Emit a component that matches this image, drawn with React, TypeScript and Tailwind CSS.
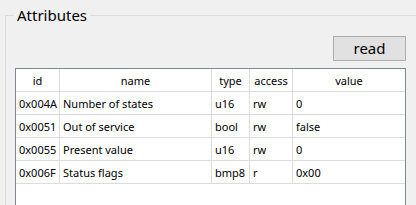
import type { ReactNode } from 'react';

// ─── Data ─────────────────────────────────────────────────────────────────────

type Attribute = { id: string; name: string; type: string; access: string; value: string };

const ATTRIBUTES: Attribute[] = [
  { id: '0x004A', name: 'Number of states', type: 'u16',  access: 'rw', value: '0' },
  { id: '0x0051', name: 'Out of service',   type: 'bool', access: 'rw', value: 'false' },
  { id: '0x0055', name: 'Present value',    type: 'u16',  access: 'rw', value: '0' },
  { id: '0x006F', name: 'Status flags',     type: 'bmp8', access: 'r',  value: '0x00' },
];

const COLS = 'grid grid-cols-[44px_152px_38px_43px_112px]';

// ─── Cells ────────────────────────────────────────────────────────────────────

function Cell({ children, last, center }: { children: ReactNode; last?: boolean; center?: boolean }) {
  return (
    <div
      className={
        'h-[23px] flex items-center border-b border-[#dcdcdc] whitespace-nowrap overflow-hidden ' +
        (last ? '' : 'border-r ') +
        (center ? 'justify-center' : 'pl-[3px]')
      }
    >
      {children}
    </div>
  );
}

function AttributeTable() {
  return (
    <div className="h-[200px] bg-white border border-[#828790] text-[11px] text-black leading-none">
      <div className={COLS}>
        <Cell center>id</Cell>
        <Cell center>name</Cell>
        <Cell center>type</Cell>
        <Cell center>access</Cell>
        <Cell center last>value</Cell>
      </div>
      {ATTRIBUTES.map((a) => (
        <div key={a.id} className={COLS}>
          <Cell>{a.id}</Cell>
          <Cell>{a.name}</Cell>
          <Cell>{a.type}</Cell>
          <Cell>{a.access}</Cell>
          <Cell last>{a.value}</Cell>
        </div>
      ))}
    </div>
  );
}

// ─── Root ─────────────────────────────────────────────────────────────────────

export default function App() {
  return (
    <div
      className="w-[416px] h-[205px] overflow-hidden bg-[#f0f0f0] pl-[5px] pt-[15px]"
      style={{ fontFamily: '"Noto Sans", "Open Sans", sans-serif' }}
    >
      {/* Group box; its right and bottom edges lie outside the window */}
      <div className="relative w-[440px] h-[260px] border-l border-t border-[#dcdcdc] pl-[9px] pt-[20px]">
        <span className="absolute left-[8px] top-[-11px] px-[3px] bg-[#f0f0f0] text-[15px] leading-[20px] text-black">
          Attributes
        </span>

        <div className="w-[391px] flex flex-col">
          <div className="flex justify-end">
            <button className="w-[73px] h-[25px] bg-[#e1e1e1] border border-[#adadad] text-[15px] leading-none text-black">
              read
            </button>
          </div>
          <div className="mt-[7px]">
            <AttributeTable />
          </div>
        </div>
      </div>
    </div>
  );
}
